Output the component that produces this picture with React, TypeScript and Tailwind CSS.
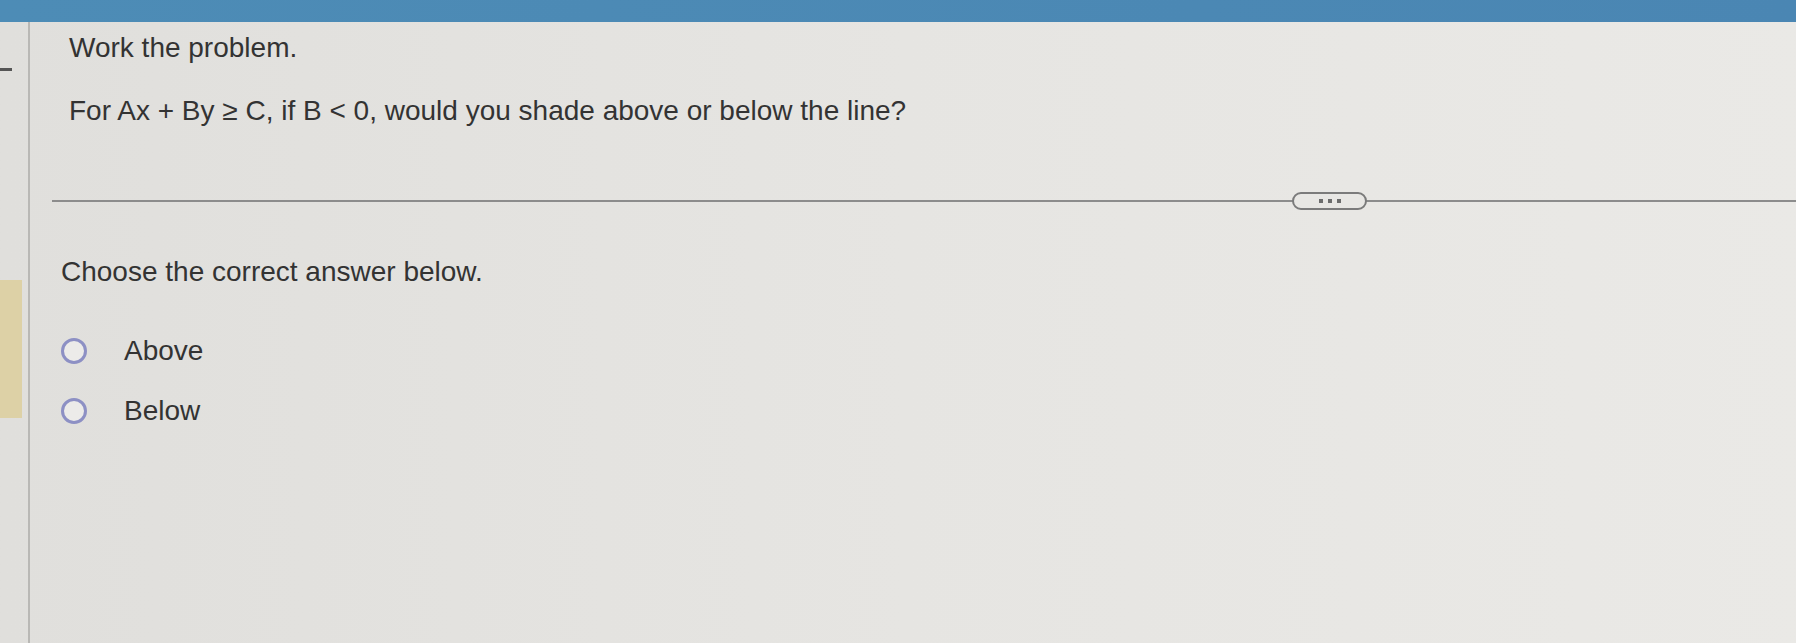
import React from "react";

function Radio({ label }: { label: string }) {
  return (
    <label className="flex items-center h-[40px] cursor-pointer">
      <span className="w-[26px] h-[26px] rounded-full border-[3px] border-[#8d90c4] bg-[#ecebe9] shrink-0" />
      <span className="ml-[37px]">{label}</span>
    </label>
  );
}

export default function App() {
  return (
    <div
      className="w-[1796px] h-[643px] overflow-hidden flex flex-col bg-gradient-to-r from-[#e0dfdc] via-[#e6e5e2] to-[#eae9e6] text-[#333333] text-[28px] leading-[32px]"
      style={{ fontFamily: '"Liberation Sans", Arial, sans-serif' }}
    >
      {/* header strip */}
      <div className="h-[22px] shrink-0 bg-gradient-to-r from-[#4d8cb6] to-[#4a86b3]" />

      <div className="flex flex-1 min-h-0">
        {/* left gutter */}
        <div className="w-[30px] shrink-0 border-r-2 border-[#b9b8b5] flex flex-col">
          <div className="mt-[46px] w-[12px] h-[3px] bg-[#555555]" />
          <div className="mt-[209px] w-[22px] h-[138px] bg-[#ddd1a6]" />
        </div>

        {/* question area */}
        <div className="flex-1 min-w-0 flex flex-col pt-[10px]">
          <div className="pl-[39px]">Work the problem.</div>
          <div className="pl-[39px] mt-[31px]">
            For Ax + By ≥ C, if B &lt; 0, would you shade above or below the line?
          </div>

          {/* divider with expand button */}
          <div className="relative ml-[22px] mt-[73px] h-[2px] bg-[#8c8c8c]">
            <button className="absolute left-[1240px] top-[-8px] w-[75px] h-[18px] rounded-[9px] border-2 border-[#7b7b7b] bg-[#e8e7e4] flex items-center justify-center gap-[5px]">
              <span className="w-[4px] h-[4px] bg-[#6c6c6c]" />
              <span className="w-[4px] h-[4px] bg-[#6c6c6c]" />
              <span className="w-[4px] h-[4px] bg-[#6c6c6c]" />
            </button>
          </div>

          <div className="pl-[31px] mt-[54px]">Choose the correct answer below.</div>

          <div className="pl-[31px] mt-[43px] flex flex-col gap-[20px]">
            <Radio label="Above" />
            <Radio label="Below" />
          </div>
        </div>
      </div>
    </div>
  );
}
